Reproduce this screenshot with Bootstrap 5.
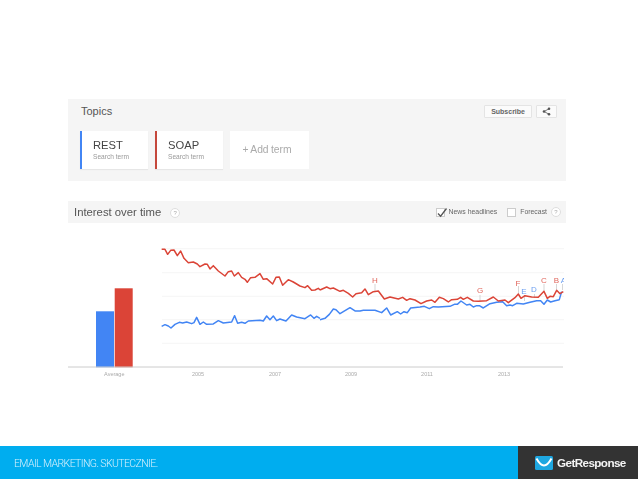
<!DOCTYPE html>
<html lang="en">
<head>
<meta charset="utf-8">
<title>Interest over time</title>
<link href="https://cdn.jsdelivr.net/npm/bootstrap@5.3.0/dist/css/bootstrap.min.css" rel="stylesheet">
<style>
html,body{height:479px;overflow:hidden;background:#fff}
body{font-family:"Liberation Sans",Arial,sans-serif;color:#444}
.slide{height:479px}
.stage{width:498px;margin:99px 0 0 68px;filter:blur(.3px)}
.topics{height:82px;background:#f5f5f5;padding:6px 9px 0 12px}
.head-label{font-size:11px;line-height:13px;color:#555;padding-left:1px}
.tools{gap:4px}
.tool-btn{height:13px;background:#fbfbfb;border:1px solid #e4e4e4;border-radius:1px;font-size:7px;font-weight:700;line-height:11px;color:#666;padding:0 6px;display:flex;align-items:center}
.tool-share{width:21px;justify-content:center;padding:0}
.terms{gap:7px;margin-top:13px;height:38px}
.term{width:68px;background:#fff;box-shadow:0 1px 1px rgba(0,0,0,.06);padding:8px 0 0 11px}
.term-blue{border-left:2px solid #4285f4}
.term-red{border-left:2px solid #c5483c}
.term-name{font-size:11.2px;line-height:13px;color:#444}
.term-sub{font-size:6.6px;line-height:9px;color:#999}
.term-add{width:79px;background:#fff;font-size:10.3px;color:#aaa;display:flex;align-items:center;justify-content:center;padding-right:5px;word-spacing:-.5px}
.interest{height:22px;margin-top:20px;background:#f5f5f5;padding:1px 5px 0 6px}
.interest-title{font-size:11.3px;color:#555}
.qmark{width:10px;height:10px;border:1px solid #ddd;border-radius:50%;font-size:6px;line-height:8px;text-align:center;color:#aaa;background:#fff}
.qmark-main{margin-left:9px}
.opts{font-size:6.9px;color:#666;gap:4px}
.box{width:9px;height:9px;border:1px solid #ccc;background:#fff;position:relative;flex:none}
.box svg{position:absolute;left:-1px;top:-2px}
.opt-gap{margin-left:6px}
.chart{display:block;width:498px;height:157px}
.chart text{font-family:"Liberation Sans",Arial,sans-serif}
.band{height:33px;background:#00adef;margin-top:auto}
.slogan{font-family:Roboto,"Liberation Sans",sans-serif;font-weight:300;font-size:10.5px;letter-spacing:-.6px;color:#d5f0fc;padding-left:14px;padding-top:2px;filter:blur(.25px)}
.brand{width:120px;background:#333;gap:4px;padding-left:17px}
.brand-name{font-size:11.7px;font-weight:700;color:#f4f4f4;letter-spacing:-.6px;filter:blur(.25px)}
</style>
</head>
<body>
<div class="slide d-flex flex-column">
  <main class="stage">
    <section class="topics">
      <div class="d-flex justify-content-between align-items-start">
        <div class="head-label">Topics</div>
        <div class="d-flex tools">
          <div class="tool-btn">Subscribe</div>
          <div class="tool-btn tool-share">
            <svg width="9" height="9" viewBox="0 0 9 9" aria-hidden="true"><path d="M7 1.8 2 4.5 7 7.2" fill="none" stroke="#555" stroke-width=".8"/><circle cx="7" cy="1.8" r="1.3" fill="#555"/><circle cx="2" cy="4.5" r="1.3" fill="#555"/><circle cx="7" cy="7.2" r="1.3" fill="#555"/></svg>
          </div>
        </div>
      </div>
      <div class="d-flex terms">
        <div class="term term-blue"><div class="term-name">REST</div><div class="term-sub">Search term</div></div>
        <div class="term term-red"><div class="term-name">SOAP</div><div class="term-sub">Search term</div></div>
        <div class="term-add">+ Add term</div>
      </div>
    </section>
    <section class="interest d-flex align-items-center justify-content-between">
      <div class="d-flex align-items-center"><span class="interest-title">Interest over time</span><span class="qmark qmark-main">?</span></div>
      <div class="d-flex align-items-center opts">
        <span class="box"><svg width="12" height="12" viewBox="0 0 12 12" aria-hidden="true"><path d="M2 6.5 4.6 9.2 10.5 1.500" fill="none" stroke="#555" stroke-width="1.3"/></svg></span>
        <span>News headlines</span>
        <span class="box opt-gap"></span>
        <span>Forecast</span>
        <span class="qmark">?</span>
      </div>
    </section>
    <svg class="chart" viewBox="68 223 498 157" role="img" aria-label="Interest over time chart">
      <defs><clipPath id="plot-edge"><rect x="68" y="223" width="496" height="157"/></clipPath></defs>
      <g stroke="#f1f1f1" stroke-width=".7">
        <path d="M162 248.7H564M162 272.7H564M162 296.3H564M162 319.7H564M162 343.3H564"/>
      </g>
      <rect x="96" y="311.3" width="18" height="56" fill="#4285f4"/>
      <rect x="114.7" y="288.3" width="18" height="79" fill="#db4437"/>
      <path d="M68 367H563" stroke="#ccc" stroke-width="1"/>
      <g font-size="5.5" fill="#aaa" text-anchor="middle">
        <text x="114.3" y="375.5">Average</text><text x="198" y="375.5">2005</text><text x="275" y="375.5">2007</text><text x="351" y="375.5">2009</text><text x="427" y="375.5">2011</text><text x="504" y="375.5">2013</text>
      </g>
      <g stroke="#bbb" stroke-width=".6">
        <path d="M375 284V292M480 295V301M518.500 286V294M524.500 295V301M534.500 294V298M544 284V291M556.500 284V291M562.500 284V290"/>
      </g>
      <g font-size="8" text-anchor="middle" clip-path="url(#plot-edge)">
        <g fill="#e0665c"><text x="375" y="283">H</text><text x="480" y="293">G</text><text x="518" y="286">F</text><text x="544" y="283">C</text><text x="556.500" y="282.500">B</text></g>
        <g fill="#6a9ef0"><text x="524" y="294">E</text><text x="534" y="292">D</text><text x="563.500" y="282.500">A</text></g>
      </g>
      <g fill="none" stroke-width="4.500" stroke-linejoin="round" transform="translate(60 235) scale(.3333)">
        <polyline stroke="#4285f4" points="305,274 315,269 325,273 333,279 345,268 358,262 368,264 380,261 395,266 402,263 410,247 420,268 430,261 440,268 460,267 475,257 490,264 515,261 524,242 533,265 545,262 555,265 565,258 600,256 610,258 620,243 630,254 640,243 650,257 660,252 678,258 695,240 710,246 735,251 752,240 762,250 770,244 780,250"/>
        <polyline stroke="#db4437" points="305,43 315,43 323,58 332,46 342,45 352,62 362,48 372,70 385,83 400,81 412,87 420,95 435,87 442,88 450,102 460,92 475,108 495,123 505,110 515,108 523,123 535,113 545,127 555,133 562,142 572,128 585,127 600,116 610,133 620,131 638,147 648,127 658,126 668,151 685,134 700,141 720,153 735,158 743,152 755,166 765,165 775,160 780,165"/>
      </g>
      <g fill="none" stroke-width="4.500" stroke-linejoin="round" transform="translate(320 235) scale(.3333)">
        <polyline stroke="#4285f4" points="0,254 15,250 28,238 40,222 48,224 60,236 75,227 90,218 105,228 120,228 130,226 165,226 185,233 200,219 212,240 232,230 242,237 252,230 262,233 272,219 300,216 313,214 328,221 340,215 355,216 390,214 403,208 412,208 423,198 440,210 450,208 460,216 470,212 478,212 490,219 510,206 530,202 548,200 560,212 570,210 578,212 590,205 610,207 630,202 650,197 662,197 672,208 682,195 692,201 705,197 718,194 725,170"/>
        <polyline stroke="#db4437" points="0,165 20,156 30,161 40,159 60,169 70,166 85,175 98,186 108,176 125,173 135,162 145,179 160,170 175,168 193,192 210,186 235,192 248,187 260,196 270,191 285,195 303,206 320,198 335,195 345,202 358,187 370,191 385,201 395,194 412,193 422,187 430,193 442,187 460,198 475,199 500,197 520,186 535,198 555,195 565,203 585,188 595,177 603,190 615,182 635,186 655,187 672,169 682,190 690,184 700,185 710,166 720,176 730,170"/>
      </g>
    </svg>
  </main>
  <footer class="band d-flex justify-content-between">
    <div class="slogan d-flex align-items-center">EMAIL MARKETING. SKUTECZNIE.</div>
    <div class="brand d-flex align-items-center">
      <svg width="18" height="14" viewBox="0 0 18 14" aria-hidden="true"><rect width="18" height="14" rx="1.500" fill="#1ea7e1"/><path d="M1.500 2.500C4 7 6 9.500 9 9.500S14 7 16.500 2.500" fill="none" stroke="#fff" stroke-width="2"/></svg>
      <span class="brand-name">GetResponse</span>
    </div>
  </footer>
</div>
<script src="https://cdn.jsdelivr.net/npm/bootstrap@5.3.0/dist/js/bootstrap.bundle.min.js"></script>
</body>
</html>
